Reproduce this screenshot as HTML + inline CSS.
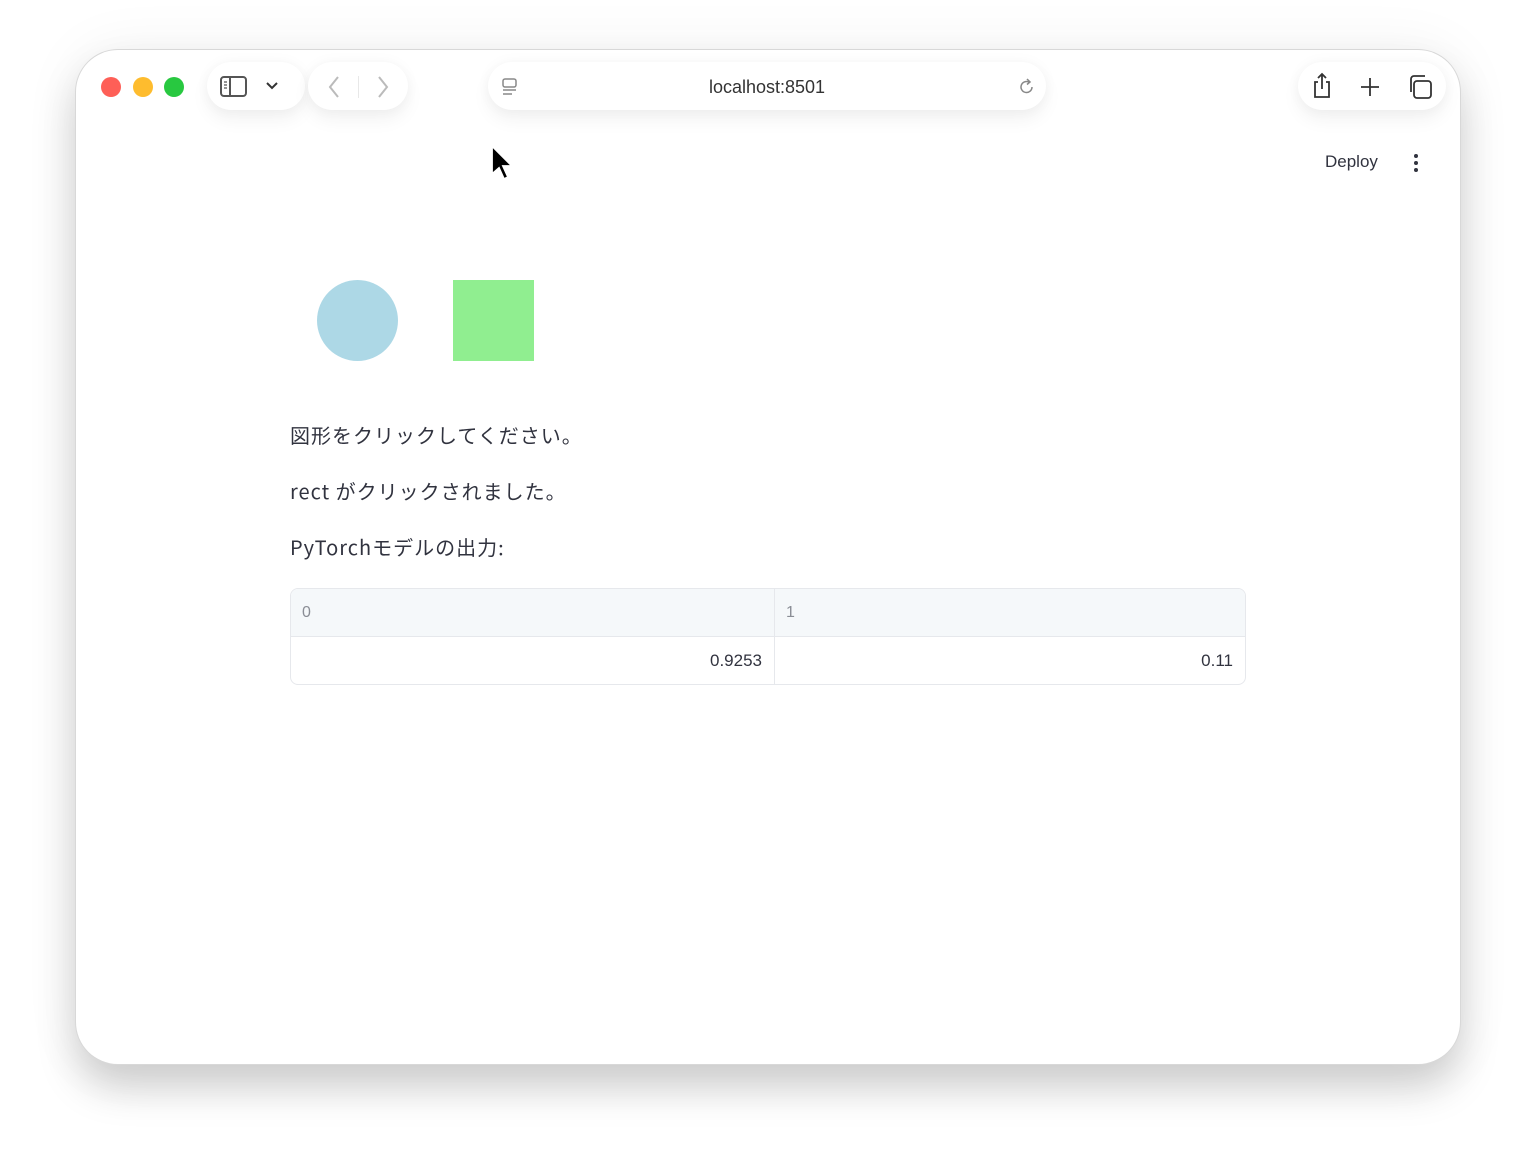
<!DOCTYPE html>
<html><head><meta charset="utf-8"><style>
*{margin:0;padding:0;box-sizing:border-box}
body{width:1536px;height:1165px;background:#fff;position:relative;overflow:hidden;font-family:"Liberation Sans","Noto Sans CJK JP",sans-serif}
.win{position:absolute;left:76px;top:50px;width:1384px;height:1014px;background:#fff;border-radius:42px;box-shadow:0 0 0 1px #d8d8d8,0 24px 40px rgba(0,0,0,.18),0 0 60px rgba(0,0,0,.06)}
.dot{position:absolute;top:77px;width:20px;height:20px;border-radius:50%}
.pill{position:absolute;background:#fff;border-radius:24px;box-shadow:0 10px 18px rgba(0,0,0,.05),0 0 14px rgba(0,0,0,.04)}
.a{position:absolute}
.t{position:absolute;font-size:20px;color:#31333f;font-family:"Noto Sans CJK JP",sans-serif;letter-spacing:1px;line-height:28px}
.tbl{position:absolute;left:290px;top:588px;width:956px;height:97px;border:1px solid #e6e8ec;border-radius:8px;overflow:hidden}
.h{position:absolute;top:0;height:48px;background:#f5f8fa;border-bottom:1px solid #e6e8ec;color:#8a8d95;font-size:16px;line-height:48px;padding-left:11px}
.c{position:absolute;top:48px;height:48px;color:#31333f;font-size:17px;line-height:48px;text-align:right;padding-right:12px}
</style></head><body>
<div class="win"></div>
<div class="dot" style="left:101px;background:#fe5f57"></div>
<div class="dot" style="left:133px;background:#febc2e"></div>
<div class="dot" style="left:164px;background:#28c840"></div>
<div class="pill" style="left:207px;top:62px;width:98px;height:48px"></div>
<div class="pill" style="left:308px;top:62px;width:100px;height:48px"></div>
<div class="pill" style="left:488px;top:62px;width:558px;height:48px"></div>
<div class="pill" style="left:1298px;top:62px;width:148px;height:48px"></div>
<svg class="a" style="left:218px;top:74px" width="30" height="26" viewBox="0 0 30 26" fill="none" stroke="#555" stroke-width="2"><rect x="3" y="3" width="25" height="19" rx="3"/><line x1="12" y1="3" x2="12" y2="22"/><path d="M6 8h3M6 11h3M6 14h3" stroke-width="1.3"/></svg>
<svg class="a" style="left:264px;top:80px" width="16" height="12" viewBox="0 0 16 12" fill="none" stroke="#333" stroke-width="2"><path d="M3 3l5 5 5-5"/></svg>
<svg class="a" style="left:325px;top:74px" width="18" height="26" viewBox="0 0 18 26" fill="none" stroke="#bbb" stroke-width="2"><path d="M13 3L5 13l8 10"/></svg>
<div class="a" style="left:358px;top:76px;width:1px;height:22px;background:#e8e8e8"></div>
<svg class="a" style="left:374px;top:74px" width="18" height="26" viewBox="0 0 18 26" fill="none" stroke="#bbb" stroke-width="2"><path d="M5 3l8 10-8 10"/></svg>
<svg class="a" style="left:500px;top:77px" width="20" height="20" viewBox="0 0 20 20" fill="none" stroke="#888" stroke-width="1.5"><rect x="3" y="2" width="13" height="8" rx="2"/><path d="M3 13h13M3 17h9"/></svg>
<div class="a" style="left:488px;top:77px;width:558px;text-align:center;font-size:18px;color:#333">localhost:8501</div>
<svg class="a" style="left:1017px;top:77px" width="20" height="20" viewBox="0 0 20 20" fill="none" stroke="#888" stroke-width="1.5"><path d="M15 10a5.5 5.5 0 1 1-3-4.9"/><path d="M10 2l3 3-3 2.5"/></svg>
<svg class="a" style="left:1310px;top:72px" width="24" height="28" viewBox="0 0 24 28" fill="none" stroke="#333" stroke-width="1.8"><path d="M8 10H5v15h14V10h-3M12 2v15M8 6l4-4 4 4"/></svg>
<svg class="a" style="left:1359px;top:76px" width="22" height="22" viewBox="0 0 22 22" fill="none" stroke="#333" stroke-width="1.8"><path d="M11 2v18M2 11h18"/></svg>
<svg class="a" style="left:1406px;top:73px" width="28" height="28" viewBox="0 0 28 28" fill="none" stroke="#333" stroke-width="1.8"><rect x="8" y="8" width="17" height="17" rx="3"/><path d="M5 19V6a3 3 0 0 1 3-3h11"/></svg>
<div class="a" style="left:1325px;top:152px;font-size:17px;color:#31333f">Deploy</div>
<svg class="a" style="left:1410px;top:152px" width="12" height="22" viewBox="0 0 12 22" fill="#31333f"><circle cx="6" cy="4" r="2"/><circle cx="6" cy="11" r="2"/><circle cx="6" cy="18" r="2"/></svg>
<svg class="a" style="left:488px;top:143px" width="28" height="42" viewBox="0 0 28 42"><path d="M4 3v28l7-6 5 11 4-2-5-11h9z" fill="#000" stroke="#fff" stroke-width="1.8"/></svg>
<div class="a" style="left:317px;top:280px;width:81px;height:81px;border-radius:50%;background:#add8e6"></div>
<div class="a" style="left:453px;top:280px;width:81px;height:81px;background:#90ee90"></div>
<div class="t" style="left:290px;top:421px">図形をクリックしてください。</div>
<div class="t" style="left:290px;top:477px">rect がクリックされました。</div>
<div class="t" style="left:290px;top:533px">PyTorchモデルの出力:</div>
<div class="tbl">
<div class="h" style="left:0;width:484px;border-right:1px solid #e6e8ec">0</div>
<div class="h" style="left:484px;width:472px">1</div>
<div class="c" style="left:0;width:484px;border-right:1px solid #e6e8ec">0.9253</div>
<div class="c" style="left:484px;width:470px">0.11</div>
</div>
</body></html>
